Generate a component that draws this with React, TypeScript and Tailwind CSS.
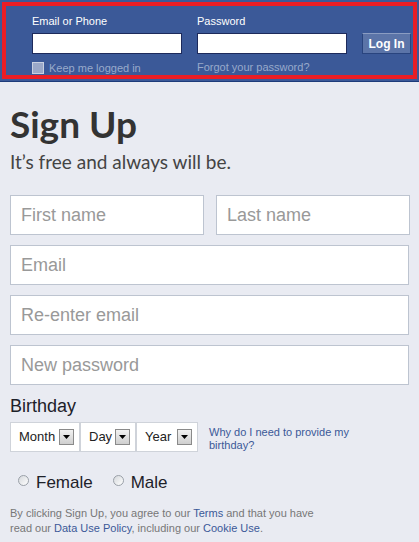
import type { ReactNode } from "react";

const ui = { fontFamily: '"Liberation Sans", Arial, sans-serif' };
const display = { fontFamily: 'Lato, "Open Sans", sans-serif' };

function Arrow() {
  return (
    <span className="flex h-[16px] w-[15px] items-center justify-center border border-[#8a8a8a] bg-gradient-to-b from-[#f2f2f2] to-[#cfcfcf]">
      <svg width="7" height="4" viewBox="0 0 7 4">
        <path d="M0 0h7L3.5 4z" fill="#000" />
      </svg>
    </span>
  );
}

function Select({ label, width }: { label: string; width: string }) {
  return (
    <div
      className={`flex h-[30px] items-center justify-between border border-[#cfd3da] bg-white pl-[8px] pr-[5px] ${width}`}
    >
      <span className="text-[13px] text-[#222]">{label}</span>
      <Arrow />
    </div>
  );
}

function Radio({ children }: { children: ReactNode }) {
  return (
    <label className="flex items-center gap-[7px]">
      <span className="mt-[-6px] block size-[11px] rounded-full border border-[#9aa0a8] bg-gradient-to-br from-[#d5d8dc] to-[#ffffff]" />
      <span className="text-[17px] leading-[20px] text-[#1d2129]">{children}</span>
    </label>
  );
}

function Field({ placeholder, className = "" }: { placeholder: string; className?: string }) {
  return (
    <input
      placeholder={placeholder}
      className={`h-[40px] border border-[#bdc4d0] bg-white px-[10px] text-[18px] text-[#333] placeholder:text-[#999] outline-none ${className}`}
    />
  );
}

export default function App() {
  return (
    <div className="min-h-screen bg-[#e9ebf2]" style={ui}>
      <header className="h-[82px] border-b border-[#1d3b7a] bg-[#3b5998] p-[2px]">
        <div className="h-[77px] border-4 border-[#ea1d25] pl-[26px] pt-[8px]">
          <div className="grid grid-cols-[150px_150px_49px] gap-x-[15px]">
            <span className="text-[11px] leading-[14px] text-white">Email or Phone</span>
            <span className="text-[11px] leading-[14px] text-white">Password</span>
            <span />
            <input className="mt-[5px] h-[21px] border border-[#1d2a5b] bg-white outline-none" />
            <input
              type="password"
              className="mt-[5px] h-[21px] border border-[#1d2a5b] bg-white outline-none"
            />
            <button className="mt-[5px] h-[21px] border border-[#29447e] border-t-[#8a9cc2] bg-[#5b74a8] text-[12px] font-bold text-white">
              Log In
            </button>
            <label className="mt-[6px] flex items-center gap-[5px]">
              <span className="block size-[12px] border border-[#c8d0e0] bg-[#9aa8c8]" />
              <span className="text-[11px] text-[#98a9ca]">Keep me logged in</span>
            </label>
            <a className="mt-[6px] text-[11px] leading-[14px] text-[#98a9ca]">Forgot your password?</a>
          </div>
        </div>
      </header>

      <main className="px-[10px]">
        <h1 className="mt-[20px] text-[37px] font-bold leading-[44px] text-[#333]" style={display}>
          Sign Up
        </h1>
        <p className="mt-[4px] text-[19px] leading-[24px] text-[#444]" style={display}>
          It’s free and always will be.
        </p>

        <div className="mt-[21px] flex flex-col gap-[10px]">
          <div className="flex gap-[12px]">
            <Field placeholder="First name" className="w-[194px]" />
            <Field placeholder="Last name" className="w-[194px]" />
          </div>
          <Field placeholder="Email" className="w-[399px]" />
          <Field placeholder="Re-enter email" className="w-[399px]" />
          <Field placeholder="New password" className="w-[399px]" />
        </div>

        <div className="mt-[10px] text-[18px] leading-[22px] text-[#1d2129]">Birthday</div>
        <div className="mt-[5px] flex items-start">
          <Select label="Month" width="w-[70px]" />
          <Select label="Day" width="w-[56px]" />
          <Select label="Year" width="w-[62px]" />
          <a className="ml-[11px] mt-[4px] w-[160px] text-[11px] leading-[13px] text-[#3b5998]">
            Why do I need to provide my
            <br />
            birthday?
          </a>
        </div>

        <div className="mt-[21px] flex gap-[20px] pl-[8px]">
          <Radio>Female</Radio>
          <Radio>Male</Radio>
        </div>

        <p className="mt-[13px] text-[11px] leading-[15px] text-[#777]">
          By clicking Sign Up, you agree to our <a className="text-[#3b5998]">Terms</a> and that
          you have
          <br />
          read our <a className="text-[#3b5998]">Data Use Policy</a>, including our{" "}
          <a className="text-[#3b5998]">Cookie Use</a>.
        </p>
      </main>
    </div>
  );
}
